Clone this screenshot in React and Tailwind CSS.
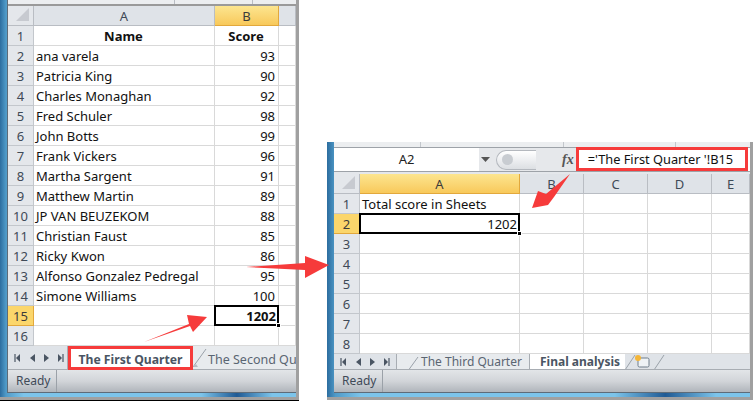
import React from 'react';

const scores = [
  ['ana varela', 93],
  ['Patricia King', 90],
  ['Charles Monaghan', 92],
  ['Fred Schuler', 98],
  ['John Botts', 99],
  ['Frank Vickers', 96],
  ['Martha Sargent', 91],
  ['Matthew Martin', 89],
  ['JP VAN BEUZEKOM', 88],
  ['Christian Faust', 85],
  ['Ricky Kwon', 86],
  ['Alfonso Gonzalez Pedregal', 95],
  ['Simone Williams', 100],
];

const RowNum = ({ n, active }) => (
  <div
    className={`flex items-center justify-center h-full pt-[2px] border-r border-b text-[13px] ${
      active
        ? 'bg-[#fbd66b] border-[#e2a83c] text-[#3b3b3b]'
        : 'bg-[#e4e7eb] border-[#c3c7cc] text-[#3f4a57]'
    }`}
  >
    {n}
  </div>
);

const Corner = () => (
  <div className="relative h-full bg-[#e4e7eb] border-r border-b border-[#b9bdc3]">
    <svg className="absolute right-1 bottom-1" width="13" height="13" viewBox="0 0 13 13">
      <path d="M13 0V13H0Z" fill="#c7cad0" />
    </svg>
  </div>
);

const ColHead = ({ label, active }) => (
  <div
    className={`flex items-center justify-center h-full pt-[2px] border-r border-b text-[13px] ${
      active
        ? 'bg-gradient-to-b from-[#fce58f] to-[#f8c95a] border-[#e2a83c] text-[#3b3b3b]'
        : 'bg-[#dfe3e8] border-[#b9bdc3] text-[#3f4a57]'
    }`}
  >
    {label}
  </div>
);

const Cell = ({ children, right, bold, center }) => (
  <div
    className={`flex items-center h-full pt-[2px] pl-[2px] pr-[3px] border-r border-b border-[#d9d9d9] bg-white text-[13px] text-[#111] whitespace-nowrap overflow-hidden ${
      right ? 'justify-end' : center ? 'justify-center' : 'justify-start'
    } ${bold ? 'font-bold' : ''}`}
  >
    {children}
  </div>
);

const ActiveCell = ({ children, bold }) => (
  <div className="relative h-full">
    <div
      className={`absolute -left-px -top-px right-0 bottom-0 flex items-center justify-end pt-[2px] pr-[1px] border-2 border-black bg-white text-[13px] text-[#111] ${
        bold ? 'font-bold' : ''
      }`}
    >
      {children}
    </div>
    <div className="absolute -right-[2px] -bottom-[2px] w-[5px] h-[5px] bg-black border border-white" />
  </div>
);

const NavArrows = () => (
  <svg width="50" height="12" viewBox="0 0 50 12" className="shrink-0">
    <path d="M1 2v8" stroke="#4a5563" strokeWidth="1.2" />
    <path d="M6 2v8L2 6Z" fill="#4a5563" />
    <path d="M21 2v8L16 6Z" fill="#4a5563" />
    <path d="M30 2v8L35 6Z" fill="#4a5563" />
    <path d="M44 2v8L48 6Z" fill="#4a5563" />
    <path d="M49 2v8" stroke="#4a5563" strokeWidth="1.2" />
  </svg>
);

const StatusBar = () => (
  <div className="flex items-stretch shrink-0 h-[24px] bg-gradient-to-b from-[#e2e5e8] via-[#d2d5d9] to-[#b0b5bb] border-t border-[#a8adb3] border-b border-b-[#5d6b78]">
    <div className="flex items-center pl-2 w-[49px] border-r border-[#9ba1a8] text-[12px] text-[#3f4a57]">
      Ready
    </div>
  </div>
);

const Slant = ({ className }) => (
  <svg className={`absolute top-0 ${className}`} width="14" height="21" viewBox="0 0 14 21">
    <path d="M0 21 13 3" stroke="#9aa1a9" fill="none" />
    <path d="M0 21h5l-2-3Z" fill="#b7bcc3" />
  </svg>
);

const Frame = ({ children, className }) => (
  <div
    className={`flex flex-col bg-[linear-gradient(90deg,#2c6d9f_0,#4f9ac8_2%,#7cc4ea_8%,#7cc4ea_68%,#1f5a94_80%,#7cc4ea_92%)] pb-[4px] border-r-[3px] border-b-[3px] border-[#a0a0a0] ${className}`}
  >
    {children}
  </div>
);

const LeftSheet = () => (
  <div className="border-b border-black">
    <Frame className="w-[299px] h-[400px] pl-[8px]">
      <div className="flex flex-col flex-1 overflow-hidden bg-white border-l border-[#5d6b78] -ml-px">
        <div className="flex justify-start h-[6px] shrink-0 bg-[#eceef0] border-b-2 border-[#9a9a9a]">
          <div className="w-[167px] border-r border-[#b9bdc3]" />
          <div className="w-[78px] border-r border-[#b9bdc3]" />
        </div>
        <div className="grid grid-cols-[26px_181px_64px_17px] auto-rows-[20px]">
          <Corner />
          <ColHead label="A" />
          <ColHead label="B" active />
          <ColHead label="" />
          <RowNum n={1} />
          <Cell center bold>Name</Cell>
          <Cell center bold>Score</Cell>
          <Cell />
          {scores.map(([name, score], i) => (
            <React.Fragment key={name}>
              <RowNum n={i + 2} />
              <Cell>{name}</Cell>
              <Cell right>{score}</Cell>
              <Cell />
            </React.Fragment>
          ))}
          <RowNum n={15} active />
          <Cell />
          <ActiveCell bold>1202</ActiveCell>
          <Cell />
          <RowNum n={16} />
          <Cell />
          <Cell />
          <Cell />
        </div>
        <div className="flex items-center flex-1 bg-[#dfe3e8] overflow-hidden">
          <div className="flex items-center w-[60px] h-full pl-[6px] border-r border-[#a8adb3] shrink-0">
            <NavArrows />
          </div>
          <div className="flex items-center justify-center w-[125px] h-full pt-[5px] bg-white text-[12.2px] font-bold text-[#4a5563] shrink-0">
            The First Quarter
          </div>
          <div className="relative flex items-center h-full pt-[5px] pl-[15px] bg-[#e8ebee] text-[12.5px] text-[#5a6572] whitespace-nowrap">
            <Slant className="left-0" />
            The Second Quarter
          </div>
        </div>
        <StatusBar />
      </div>
    </Frame>
  </div>
);

const RightSheet = () => (
  <Frame className="w-[426px] h-[258px] mt-[142px] pl-[7px]">
    <div className="flex flex-col flex-1 overflow-hidden bg-[#e4e7eb]">
      <div className="flex h-[5px] shrink-0 bg-[#eceef0]">
        <div className="w-[87px] border-r border-[#c3c7cc]" />
        <div className="w-[143px] border-r border-[#c3c7cc]" />
        <div className="w-[112px] border-r border-[#c3c7cc]" />
      </div>
      <div className="flex items-center h-[25px] shrink-0 bg-[#e6e8eb] border-y border-[#9da2a8]">
        <div className="flex items-center justify-center w-[145px] h-full bg-white text-[13px] text-[#222]">A2</div>
        <svg width="9" height="5" viewBox="0 0 9 5" className="ml-[2px]">
          <path d="M0 0h9L4.5 5Z" fill="#555" />
        </svg>
        <div className="relative w-[40px] h-[20px] ml-[6px] rounded-l-full border-l border-y border-[#b4b8be] bg-gradient-to-b from-white to-[#dcdfe3]">
          <div className="absolute left-[5px] top-[3px] w-[11px] h-[11px] rounded-full bg-[#c8ccd1]" />
        </div>
        <span className="ml-[26px] font-['Liberation_Serif',serif] italic font-bold text-[14px] text-[#555]">fx</span>
        <div className="flex items-center flex-1 h-full ml-[5px] pl-[9px] bg-white text-[12.8px] text-[#111] whitespace-nowrap">
          ='The First Quarter '!B15
        </div>
      </div>
      <div className="h-[2px] shrink-0" />
      <div className="grid grid-cols-[26px_160px_64px_64px_64px_1fr] auto-rows-[20px]">
        <Corner />
        <ColHead label="A" active />
        <ColHead label="B" />
        <ColHead label="C" />
        <ColHead label="D" />
        <ColHead label="E" />
        {[1, 2, 3, 4, 5, 6, 7, 8].map((n) => (
          <React.Fragment key={n}>
            <RowNum n={n} active={n === 2} />
            {n === 2 ? <ActiveCell>1202</ActiveCell> : <Cell>{n === 1 ? 'Total score in Sheets' : ''}</Cell>}
            <Cell />
            <Cell />
            <Cell />
            <Cell />
          </React.Fragment>
        ))}
      </div>
      <div className="flex items-center flex-1 bg-[#dfe3e8] overflow-hidden">
        <div className="flex items-center w-[63px] h-full pl-[6px] border-r border-[#a8adb3] shrink-0">
          <NavArrows />
        </div>
        <div className="relative flex items-center w-[133px] h-full pt-[1px] pl-[24px] bg-[#e8ebee] border-r border-[#a8adb3] text-[12px] text-[#5a6572] whitespace-nowrap shrink-0">
          <Slant className="left-[8px] -top-[5px]" />
          The Third Quarter
        </div>
        <div className="flex items-center w-[95px] h-full pt-[1px] pl-[10px] bg-white text-[12px] font-bold text-[#4a5563] shrink-0">
          Final analysis
        </div>
        <svg width="40" height="16" viewBox="0 0 40 16" className="shrink-0">
          <path d="M0 16 10 1" stroke="#9aa1a9" fill="none" />
          <path d="M29 16 39 1" stroke="#9aa1a9" fill="none" />
          <rect x="13" y="4" width="11" height="9" rx="1.5" fill="#eef2f6" stroke="#6e7c8a" />
          <circle cx="13" cy="4" r="3" fill="#f4b63a" />
        </svg>
      </div>
      <StatusBar />
    </div>
  </Frame>
);

const Arrow = ({ points, className, width, height }) => (
  <svg
    className={`absolute pointer-events-none ${className}`}
    width={width}
    height={height}
    viewBox={`0 0 ${width} ${height}`}
  >
    <polygon points={points} fill="#f63b3b" />
  </svg>
);

export default function App() {
  return (
    <div className="relative w-[753px] h-[405px] overflow-hidden bg-white font-['Noto_Sans',sans-serif]">
      <div className="flex justify-between items-start">
        <LeftSheet />
        <RightSheet />
      </div>

      <div className="absolute left-[68px] top-[346px] w-[125px] h-[24px] border-[3px] border-[#f63b3b]" />
      <div className="absolute left-[576px] top-[147px] w-[172px] h-[24px] border-[3px] border-[#f63b3b]" />

      <Arrow className="left-[144px] top-[313px]" width="64" height="30" points="0,29 45,11 43,2 63,4 49,19 46,13" />
      <Arrow className="left-[245px] top-[255px]" width="86" height="24" points="1,12 60,8 60,1 84,10 60,23 60,15" />
      <Arrow className="left-[530px] top-[172px]" width="42" height="38" points="40,2 24,25 18,33 2,36 8,19 16,22" />
    </div>
  );
}
